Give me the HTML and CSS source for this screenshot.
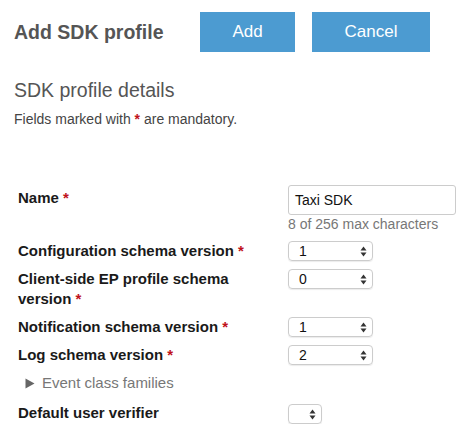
FILE: index.html
```html
<!DOCTYPE html>
<html>
<head>
<meta charset="utf-8">
<link rel="stylesheet" href="styles.css">
</head>
<body>
<div class="page">
  <div class="header">
    <h1 class="title">Add SDK profile</h1>
    <button class="btn btn-add">Add</button>
    <button class="btn btn-cancel">Cancel</button>
  </div>
  <h2 class="section-title">SDK profile details</h2>
  <p class="note">Fields marked with <span class="req">*</span> are mandatory.</p>

  <div class="form">
    <div class="row row-name">
      <label class="label">Name <span class="req">*</span></label>
      <div class="control">
        <div class="text-input">Taxi SDK</div>
        <div class="hint">8 of 256 max characters</div>
      </div>
    </div>
    <div class="row">
      <label class="label">Configuration schema version <span class="req">*</span></label>
      <div class="control">
        <div class="select"><span class="select-value">1</span><svg class="arrows" width="7" height="11" viewBox="0 0 7 11"><path d="M3.5 0.5 L6.5 4.5 L0.5 4.5 Z M3.5 10.5 L6.5 6.5 L0.5 6.5 Z" fill="#333"/></svg></div>
      </div>
    </div>
    <div class="row">
      <label class="label">Client-side EP profile schema version <span class="req">*</span></label>
      <div class="control">
        <div class="select"><span class="select-value">0</span><svg class="arrows" width="7" height="11" viewBox="0 0 7 11"><path d="M3.5 0.5 L6.5 4.5 L0.5 4.5 Z M3.5 10.5 L6.5 6.5 L0.5 6.5 Z" fill="#333"/></svg></div>
      </div>
    </div>
    <div class="row">
      <label class="label">Notification schema version <span class="req">*</span></label>
      <div class="control">
        <div class="select"><span class="select-value">1</span><svg class="arrows" width="7" height="11" viewBox="0 0 7 11"><path d="M3.5 0.5 L6.5 4.5 L0.5 4.5 Z M3.5 10.5 L6.5 6.5 L0.5 6.5 Z" fill="#333"/></svg></div>
      </div>
    </div>
    <div class="row">
      <label class="label">Log schema version <span class="req">*</span></label>
      <div class="control">
        <div class="select"><span class="select-value">2</span><svg class="arrows" width="7" height="11" viewBox="0 0 7 11"><path d="M3.5 0.5 L6.5 4.5 L0.5 4.5 Z M3.5 10.5 L6.5 6.5 L0.5 6.5 Z" fill="#333"/></svg></div>
      </div>
    </div>
    <div class="disclosure">
      <svg class="tri" width="10" height="11" viewBox="0 0 10 11"><path d="M0.5 0.5 L9.5 5.5 L0.5 10.5 Z" fill="#666"/></svg>
      <span>Event class families</span>
    </div>
    <div class="row row-verifier">
      <label class="label">Default user verifier</label>
      <div class="control">
        <div class="select select-small"><span class="select-value"></span><svg class="arrows" width="7" height="11" viewBox="0 0 7 11"><path d="M3.5 0.5 L6.5 4.5 L0.5 4.5 Z M3.5 10.5 L6.5 6.5 L0.5 6.5 Z" fill="#333"/></svg></div>
      </div>
    </div>
  </div>
</div>
</body>
</html>
```

FILE: styles.css
```css
html, body {
  margin: 0;
  padding: 0;
  background: #fff;
}

body {
  font-family: "Liberation Sans", Arial, sans-serif;
  color: #222;
}

.page {
  padding: 12px 0 0 14px;
}

.header {
  display: flex;
  align-items: center;
  height: 40px;
}

.title {
  margin: 0;
  width: 186px;
  font-size: 19.5px;
  line-height: 22px;
  font-weight: bold;
  color: #555;
}

.btn {
  height: 40px;
  border: none;
  background: #4c9bd1;
  color: #fff;
  font-family: "Liberation Sans", Arial, sans-serif;
  font-size: 17px;
  padding: 0;
  margin: 0;
}

.btn-add {
  width: 95px;
}

.btn-cancel {
  width: 118px;
  margin-left: 17px;
}

.section-title {
  margin: 26px 0 0 0;
  font-size: 19.5px;
  line-height: 24px;
  font-weight: normal;
  color: #555;
}

.note {
  margin: 8px 0 0 0;
  font-size: 14px;
  line-height: 18px;
  color: #444;
}

.req {
  color: #c0121b;
  font-weight: bold;
}

.form {
  margin-top: 57px;
  padding-left: 4px;
}

.row {
  display: flex;
  align-items: flex-start;
  margin-top: 8px;
}

.row-name {
  margin-top: 0;
}

.label {
  width: 270px;
  padding-right: 8px;
  box-sizing: border-box;
  font-size: 15px;
  line-height: 20px;
  font-weight: bold;
  color: #1a1a1a;
}

.row-name .label {
  padding-top: 3px;
}

.control {
  display: flex;
  flex-direction: column;
}

.text-input {
  width: 168px;
  height: 30px;
  box-sizing: border-box;
  border: 1px solid #ccc;
  border-radius: 3px;
  padding: 0 6px;
  font-size: 14px;
  line-height: 28px;
  color: #111;
}

.hint {
  font-size: 14px;
  line-height: 18px;
  color: #777;
}

.select {
  width: 85px;
  height: 20px;
  box-sizing: border-box;
  border: 1px solid #ccc;
  border-radius: 4px;
  box-shadow: 0 1px 1px rgba(0, 0, 0, 0.08);
  display: flex;
  align-items: center;
  justify-content: space-between;
  padding: 0 5px 0 10px;
  font-size: 14px;
  color: #111;
}

.select-small {
  width: 34px;
  justify-content: flex-end;
}

.arrows {
  display: block;
}

.disclosure {
  display: flex;
  align-items: center;
  margin-top: 8px;
  padding-left: 7px;
  height: 20px;
  font-size: 15px;
  line-height: 20px;
  color: #777;
}

.tri {
  margin-right: 7px;
}

.row-verifier {
  margin-top: 10px;
}

.row-verifier .select {
  margin-top: 1px;
}
```
